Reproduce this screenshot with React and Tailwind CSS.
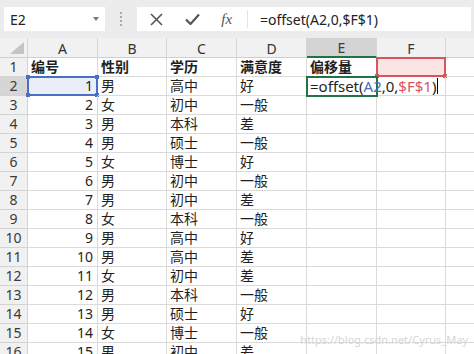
import React from 'react';

const rows = [
  ['编号', '性别', '学历', '满意度', '偏移量'],
  [1, '男', '高中', '好'],
  [2, '女', '初中', '一般'],
  [3, '男', '本科', '差'],
  [4, '男', '硕士', '一般'],
  [5, '女', '博士', '好'],
  [6, '男', '初中', '一般'],
  [7, '男', '初中', '差'],
  [8, '女', '本科', '一般'],
  [9, '男', '高中', '好'],
  [10, '男', '高中', '差'],
  [11, '女', '初中', '差'],
  [12, '男', '本科', '一般'],
  [13, '男', '硕士', '好'],
  [14, '女', '博士', '一般'],
  [15, '男', '初中', '差'],
];

const cols = [
  { key: 'A', w: 'w-[70px]' },
  { key: 'B', w: 'w-[69px]' },
  { key: 'C', w: 'w-[70px]' },
  { key: 'D', w: 'w-[70px]' },
  { key: 'E', w: 'w-[70px]' },
  { key: 'F', w: 'w-[69px]' },
  { key: 'G', w: 'w-[70px]' },
];

const font = { fontFamily: '"Noto Sans", "Noto Sans CJK SC", sans-serif' };

function Formula() {
  return (
    <span>
      =offset(<span className="text-[#4a6fc3]">A2</span>,0,<span className="text-[#d9545d]">$F$1</span>)
    </span>
  );
}

function Cell({ r, c, value }) {
  const base = 'relative h-[19px] shrink-0 border-r border-b border-[#dadada] text-[14px] leading-[18px] text-[#1f1f1f]';
  const w = cols[c].w;

  // A2: referenced range (blue)
  if (r === 1 && c === 0) {
    return (
      <div className={`${base} ${w} bg-[#e9eef8] text-right pr-[4px]`}>
        {value}
        <div className="absolute -left-[1px] -top-[1px] -right-[1px] -bottom-[1px] border-2 border-[#4a6fc3]"></div>
        <div className="absolute -left-[2px] -top-[2px] w-[4px] h-[4px] bg-[#4a6fc3]"></div>
        <div className="absolute -right-[2px] -top-[2px] w-[4px] h-[4px] bg-[#4a6fc3]"></div>
        <div className="absolute -left-[2px] -bottom-[2px] w-[4px] h-[4px] bg-[#4a6fc3]"></div>
        <div className="absolute -right-[2px] -bottom-[2px] w-[4px] h-[4px] bg-[#4a6fc3]"></div>
      </div>
    );
  }
  // F1: referenced cell (red)
  if (r === 0 && c === 5) {
    return (
      <div className={`${base} ${w} bg-[#fbe4e4]`}>
        <div className="absolute -left-[1px] -top-[1px] -right-[1px] -bottom-[1px] border-2 border-[#d9545d]"></div>
        <div className="absolute -left-[2px] -bottom-[2px] w-[4px] h-[4px] bg-[#d9545d]"></div>
        <div className="absolute -right-[2px] -bottom-[2px] w-[4px] h-[4px] bg-[#d9545d]"></div>
      </div>
    );
  }
  // E2: active cell in edit mode
  if (r === 1 && c === 4) {
    return (
      <div className={`${base} ${w} z-10 border-r-0 bg-white`}>
        <div className="absolute -left-[1px] -top-[1px] w-[72px] h-[21px] border-2 border-[#217346]"></div>
        <div className="absolute left-[3px] top-0 whitespace-nowrap text-[15px] flex items-center">
          <Formula />
          <span className="ml-[1px] inline-block w-[1px] h-[16px] bg-black"></span>
        </div>
      </div>
    );
  }
  if (r === 1 && c === 5) {
    return <div className={`${base} ${w}`}></div>;
  }

  const isNum = typeof value === 'number';
  const bold = r === 0;
  return (
    <div className={`${base} ${w} whitespace-nowrap overflow-hidden ${isNum ? 'text-right pr-[4px]' : 'pl-[3px]'} ${bold ? 'font-bold' : ''}`}>
      {value}
    </div>
  );
}

export default function App() {
  return (
    <div className="w-[474px] h-[354px] overflow-hidden bg-white relative" style={font}>
      {/* formula bar */}
      <div className="h-[38px] bg-[#ececec] flex items-center pl-[4px] pr-[3px]">
        <div className="w-[101px] h-[24px] bg-white flex items-center justify-between px-[6px] text-[14px] text-[#222]">
          <span>E2</span>
          <svg width="6" height="4" viewBox="0 0 6 4"><path d="M0 0 L6 0 L3 4 Z" fill="#777" /></svg>
        </div>
        <div className="w-[32px] flex flex-col items-center gap-[2px]">
          <span className="w-[2px] h-[2px] bg-[#aaa]"></span>
          <span className="w-[2px] h-[2px] bg-[#aaa]"></span>
          <span className="w-[2px] h-[2px] bg-[#aaa]"></span>
          <span className="w-[2px] h-[2px] bg-[#aaa]"></span>
        </div>
        <div className="flex-1 h-[24px] bg-white flex items-center">
          <div className="w-[110px] h-full flex items-center justify-around pl-[2px] pr-[4px]">
            <svg width="13" height="13" viewBox="0 0 13 13"><path d="M1 1 L12 12 M12 1 L1 12" stroke="#555" strokeWidth="1.6" /></svg>
            <svg width="15" height="12" viewBox="0 0 15 12"><path d="M1 6.5 L5.5 11 L14 1.5" stroke="#555" strokeWidth="2.2" fill="none" /></svg>
            <span className="text-[15px] italic text-[#555]" style={{ fontFamily: '"Liberation Serif", serif' }}>fx</span>
          </div>
          <div className="w-[1px] h-[18px] bg-[#e4e4e4]"></div>
          <div className="pl-[12px] text-[14px] text-[#222]">=offset(A2,0,$F$1)</div>
        </div>
      </div>

      {/* column headers */}
      <div className="flex h-[20px] bg-[#f1f1f1] border-b border-[#cfcfcf]">
        <div className="w-[28px] shrink-0 relative border-r border-[#d6d6d6]">
          <svg className="absolute right-[3px] bottom-[3px]" width="14" height="12" viewBox="0 0 14 12"><path d="M14 0 L14 12 L0 12 Z" fill="#c4c4c4" /></svg>
        </div>
        {cols.map((col) => (
          <div
            key={col.key}
            className={`${col.w} shrink-0 h-[20px] flex items-center justify-center text-[14px] border-r border-[#d6d6d6] ${col.key === 'E' ? 'bg-[#d4d4d4] border-b-2 border-b-[#217346] text-[#3b3b3b]' : 'text-[#333]'}`}
          >
            {col.key}
          </div>
        ))}
      </div>

      {/* rows */}
      {rows.map((row, r) => (
        <div key={r} className="flex">
          <div className={`w-[28px] h-[19px] shrink-0 border-r border-b border-[#d3d3d3] text-[14px] leading-[18px] text-center text-[#3a3a3a] ${r === 1 ? 'bg-[#d6d6d6]' : 'bg-[#f1f1f1]'}`}>
            {r + 1}
          </div>
          {cols.map((col, c) => (
            <Cell key={col.key} r={r} c={c} value={row[c] ?? ''} />
          ))}
        </div>
      ))}

      <div className="absolute right-[6px] bottom-[6px] text-[11px] text-[#d6d6d6] whitespace-nowrap">
        https://blog.csdn.net/Cyrus_May
      </div>
    </div>
  );
}
